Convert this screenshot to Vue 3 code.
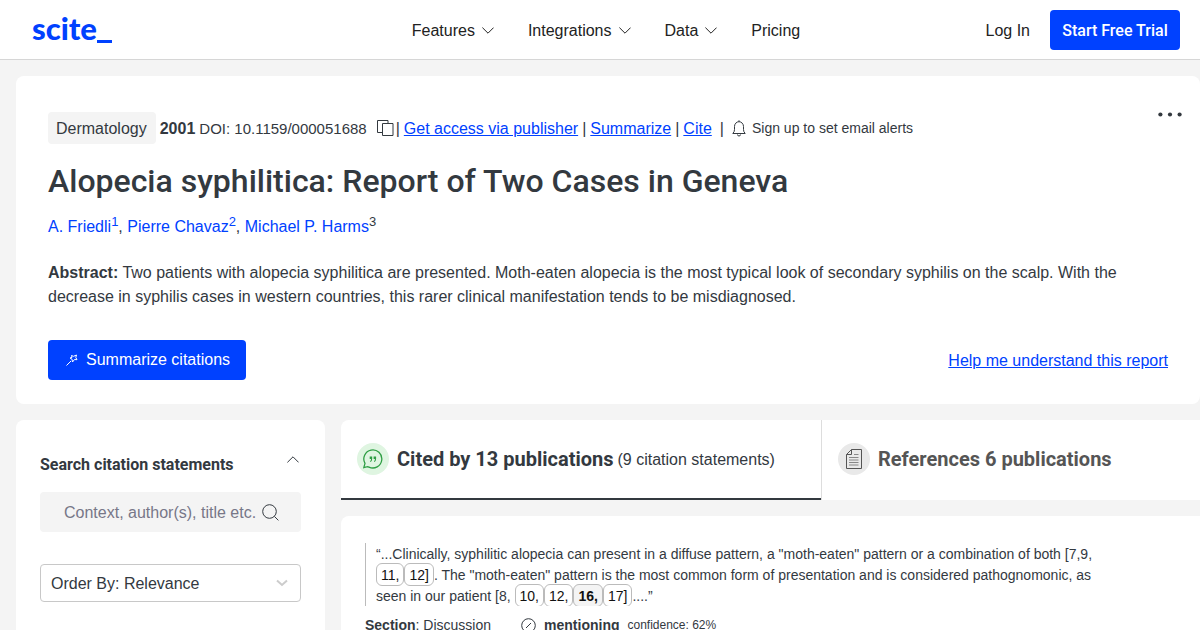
<script setup>
import { ref } from 'vue'

const menu = [
  { label: 'Features', more: true },
  { label: 'Integrations', more: true },
  { label: 'Data', more: true },
  { label: 'Pricing', more: false },
]
const query = ref('')
const order = ref('relevance')
</script>

<template>
  <div class="page">
    <header class="topbar">
      <a class="logo" href="#" aria-label="scite">scite<span class="logo-bar"></span></a>
      <nav class="menu" aria-label="Main">
        <a v-for="item in menu" :key="item.label" href="#" class="menu-item">
          {{ item.label }}
          <svg v-if="item.more" width="12" height="7" viewBox="0 0 12 7" aria-hidden="true"><path d="M.4.6 6 6.200 11.600.6" /></svg>
        </a>
      </nav>
      <div class="account">
        <a href="#" class="login">Log In</a>
        <button type="button" class="primary trial">Start Free Trial</button>
      </div>
    </header>

    <main class="content">
      <section class="paper">
        <div class="meta">
          <span class="journal">Dermatology</span>
          <strong class="year">2001</strong>
          <span class="doi">DOI: 10.1159/000051688</span>
          <button type="button" class="icon-button copy" aria-label="Copy DOI">
            <svg width="17" height="16" viewBox="0 0 17 16" aria-hidden="true"><path d="M5 12.500H.5V.5H11V3M5.500 3.500h10.500v12H5.500z" /></svg>
          </button>
          <span class="bar">|</span>
          <a href="#" class="link">Get access via publisher</a>
          <span class="bar">|</span>
          <a href="#" class="link">Summarize</a>
          <span class="bar">|</span>
          <a href="#" class="link">Cite</a>
          <span class="bar wide">|</span>
          <button type="button" class="icon-button alerts">
            <svg width="14" height="17" viewBox="0 0 14 17" aria-hidden="true"><path d="M.7 13.500h12.600M.9 13.300Q2.500 12 2.500 9.500v-3a4.500 4.800 0 0 1 9 0v3q0 2.500 1.600 3.800M7 1.700V.3M5.500 14.500a1.500 1.500 0 0 0 3 0" /></svg>
            Sign up to set email alerts
          </button>
          <button type="button" class="icon-button dots" aria-label="More actions">
            <svg width="24" height="5" viewBox="0 0 24 5" aria-hidden="true"><circle cx="2.400" cy="2.500" r="2.100" /><circle cx="12" cy="2.500" r="2.100" /><circle cx="21.600" cy="2.500" r="2.100" /></svg>
          </button>
        </div>
        <h1>Alopecia syphilitica: Report of Two Cases in Geneva</h1>
        <p class="authors"><a href="#">A. Friedli<sup>1</sup></a>, <a href="#">Pierre Chavaz<sup>2</sup></a>, <a href="#">Michael P. Harms</a><sup>3</sup></p>
        <p class="abstract"><strong>Abstract:</strong> Two patients with alopecia syphilitica are presented. Moth-eaten alopecia is the most typical look of secondary syphilis on the scalp. With the decrease in syphilis cases in western countries, this rarer clinical manifestation tends to be misdiagnosed.</p>
        <div class="actions">
          <button type="button" class="primary summarize">
            <svg width="12" height="12" viewBox="0 0 12 12" aria-hidden="true"><path d="M.5 11.500 5 7M5.500 1.500l2 .8L10.500 1l-.7 2.500 1.200 2.200-2.500-.2L6.500 8 6 5.200 4 4l2-.6z" /></svg>
            Summarize citations
          </button>
          <a href="#" class="link help">Help me understand this report</a>
        </div>
      </section>

      <div class="columns">
        <aside class="filters">
          <div class="filters-head">
            <h2>Search citation statements</h2>
            <button type="button" class="icon-button fold" aria-label="Collapse search">
              <svg width="12" height="7" viewBox="0 0 12 7" aria-hidden="true"><path d="M.4 6.400 6 .8l5.600 5.600" /></svg>
            </button>
          </div>
          <label class="search">
            <input v-model="query" type="text" placeholder="Context, author(s), title etc." aria-label="Search citation statements" />
            <svg width="17" height="17" viewBox="0 0 17 17" aria-hidden="true"><circle cx="7.500" cy="7.500" r="6.800" /><path d="m12.400 12.400 4 4" /></svg>
          </label>
          <label class="order">
            <select v-model="order" aria-label="Order by">
              <option value="relevance">Order By: Relevance</option>
            </select>
            <svg width="12" height="8" viewBox="0 0 12 8" aria-hidden="true"><path d="m1 1.500 5 4.500 5-4.500" /></svg>
          </label>
        </aside>

        <div class="results">
          <nav class="tabs" aria-label="Citations and references">
            <button type="button" class="tab active">
              <span class="badge green">
                <svg width="20" height="20" viewBox="0 0 20 20" aria-hidden="true">
                  <path class="stroke" d="M.8 18.700 2 14.400A9 9 0 1 1 6 18.100q-1.400-.6-2.600-.1z" />
                  <path class="solid" d="M6.700 7.400h2.500v2.300q0 2.500-1.800 3.200l-.4-.7q1.200-.7 1.100-2.200H6.700zM10.600 7.400h2.500v2.300q0 2.500-1.800 3.200l-.4-.7q1.200-.7 1.100-2.200h-1.400z" />
                </svg>
              </span>
              <strong>Cited by 13 publications</strong>
              <span class="count">(9 citation statements)</span>
            </button>
            <button type="button" class="tab">
              <span class="badge grey">
                <svg width="16" height="20" viewBox="0 0 16 20" aria-hidden="true"><path d="M5.500.5h10v19H.5v-14zM5.500.5v5h-5" /><path class="lines" d="M8 5.500h4.500M3 8.500h9.500M3 11h9.500M3 13.500h9.500M3 16h9.500" /></svg>
              </span>
              <strong>References 6 publications</strong>
            </button>
          </nav>

          <article class="statement">
            <blockquote>“...Clinically, syphilitic alopecia can present in a diffuse pattern, a "moth-eaten" pattern or a combination of both [7,9, <a href="#" class="cite">11,</a><a href="#" class="cite">12]</a>. The "moth-eaten" pattern is the most common form of presentation and is considered pathognomonic, as seen in our patient [8, <a href="#" class="cite">10,</a><a href="#" class="cite">12,</a><a href="#" class="cite current">16,</a><a href="#" class="cite">17]</a>....”</blockquote>
            <div class="detail">
              <span><strong>Section</strong>: Discussion</span>
              <span class="kind">
                <svg width="15" height="15" viewBox="0 0 15 15" aria-hidden="true"><circle cx="7.500" cy="7.500" r="6.800" /><path d="m5 10 5-5" /></svg>
                <strong>mentioning</strong>
                <span class="confidence">confidence: 62%</span>
              </span>
            </div>
          </article>
        </div>
      </div>
    </main>
  </div>
</template>

<style>
body {
  background: #f4f4f4;
}
</style>

<style scoped>
.page {
  height: 100vh;
  overflow: hidden;
  background: #f4f4f4;
  color: #33393f;
  font: 16px/24px "Liberation Sans", Arial, sans-serif;
}
.page *,
.page *::before {
  box-sizing: border-box;
}
svg {
  flex: none;
  fill: none;
  stroke: currentColor;
}
a {
  color: #0041ff;
  text-decoration: none;
}
button,
input,
select {
  margin: 0;
  padding: 0;
  border: 0;
  background: none;
  color: inherit;
  font: inherit;
}
h1,
h2,
p,
blockquote {
  margin: 0;
}

.topbar {
  display: grid;
  grid-template-columns: 1fr auto 1fr;
  align-items: center;
  height: 60px;
  padding: 0 20px 0 32px;
  border-bottom: 1px solid #d6d6d6;
  background: #fff;
}
.logo {
  display: flex;
  padding-bottom: 4px;
  font: 900 31px/32px Lato, sans-serif;
}
.logo-bar {
  align-self: flex-end;
  width: 15px;
  height: 3px;
  margin-bottom: 1px;
  background: #0041ff;
}
.menu {
  display: flex;
  gap: 34px;
  padding-top: 2px;
}
.menu-item {
  display: flex;
  align-items: center;
  gap: 7px;
  color: #222;
}
.account {
  display: flex;
  justify-content: flex-end;
  align-items: center;
  gap: 20px;
}
.login {
  padding-top: 2px;
  color: #222;
}
.primary {
  height: 40px;
  border-radius: 4px;
  background: #0041ff;
  color: #fff;
}
.trial {
  width: 130px;
  padding-top: 2px;
  font-family: Roboto, sans-serif;
  font-weight: 500;
}

.content {
  display: flex;
  flex-direction: column;
  gap: 16px;
  padding: 16px 0 0 16px;
}
.paper {
  padding: 36px 32px 24px;
  border-radius: 8px;
  background: #fff;
}
.meta {
  display: flex;
  align-items: center;
  height: 32px;
  white-space: nowrap;
}
.journal {
  padding: 5px 9px 3px 8px;
  border-radius: 4px;
  background: #f4f4f4;
}
.year,
.doi,
.meta .link,
.bar {
  padding-top: 2px;
}
.year {
  margin: 0 4px;
}
.doi {
  font-size: 15px;
}
.copy {
  display: flex;
  margin-left: 10px;
  margin-right: 2px;
}
.link {
  color: #0041ff;
  text-decoration: underline;
}
.bar {
  margin: 0 4px;
}
.copy + .bar {
  margin-left: 0;
}
.bar.wide {
  margin: 0 8px;
}
.alerts {
  display: flex;
  align-items: center;
  gap: 6px;
  font-size: 14px;
}
.icon-button {
  cursor: pointer;
}
.dots {
  display: flex;
  margin: -28px -14px 0 auto;
}
.dots svg {
  fill: currentColor;
  stroke: none;
}
h1 {
  margin-top: 16px;
  font: 500 32px/42px Roboto, sans-serif;
}
.authors {
  margin-top: 13px;
}
sup {
  font-size: 13px;
  line-height: 0;
}
.abstract {
  margin-top: 22px;
}
.actions {
  display: flex;
  justify-content: space-between;
  align-items: center;
  margin-top: 31px;
}
.help {
  padding-top: 2px;
}
.summarize {
  display: flex;
  align-items: center;
  gap: 8px;
  padding: 0 16px 0 18px;
}

.columns {
  display: grid;
  grid-template-columns: 309px 1fr;
  gap: 16px;
}
.filters {
  min-height: 320px;
  padding: 32px 24px;
  border-radius: 8px;
  background: #fff;
}
.filters-head {
  display: flex;
  justify-content: space-between;
}
h2 {
  padding-top: 1px;
  font: 700 16px/24px Roboto, sans-serif;
}
.fold {
  display: flex;
  align-items: center;
  height: 15px;
  padding-right: 2px;
}
.search {
  display: flex;
  align-items: center;
  height: 40px;
  margin-top: 15px;
  padding: 0 22px 0 24px;
  border-radius: 4px;
  background: #f4f4f4;
}
.search input {
  flex: 1;
  min-width: 0;
  padding-top: 2px;
  outline: none;
}
.search input::placeholder {
  color: #777788;
  opacity: 1;
}
.order {
  display: flex;
  align-items: center;
  position: relative;
  height: 38px;
  margin-top: 32px;
}
.order select {
  width: 100%;
  height: 100%;
  padding: 2px 10px 0;
  border: 1px solid #c8c8c8;
  border-radius: 4px;
  appearance: none;
}
.order svg {
  position: absolute;
  right: 13px;
  stroke: #ccc;
  stroke-width: 2;
  pointer-events: none;
}

.results {
  display: flex;
  flex-direction: column;
  gap: 16px;
  min-width: 0;
}
.tabs {
  display: flex;
  height: 80px;
  overflow: hidden;
  border-radius: 8px 0 0;
  background: #fff;
}
.tab {
  display: flex;
  align-items: center;
  flex: 1;
  padding: 0 16px 2px;
  border-left: 1px solid #ddd;
  color: #555;
  white-space: nowrap;
}
.tab.active {
  flex: 0 0 480px;
  padding-bottom: 0;
  border-left: 0;
  border-bottom: 2px solid #33393f;
  color: #33393f;
}
.tab strong {
  font: 700 20px/24px Roboto, sans-serif;
}
.badge {
  display: grid;
  place-items: center;
  width: 32px;
  height: 32px;
  margin-right: 8px;
  border-radius: 50%;
}
.green {
  background: #dff5e1;
  color: #2f9e44;
}
.green .stroke {
  stroke-width: 1.3;
}
.green .solid {
  fill: currentColor;
  stroke: none;
}
.grey {
  background: #e9e9e9;
}
.grey .lines {
  stroke: #888;
}
.count {
  margin-left: 4px;
  padding-top: 2px;
}

.statement {
  min-height: 240px;
  padding: 27px 104px 24px 24px;
  border-radius: 8px 0 0;
  background: #fff;
  font-size: 14px;
  line-height: 21px;
}
blockquote {
  height: 63px;
  overflow: hidden;
  padding-top: 1px;
  padding-left: 10px;
  border-left: 1px solid #bbb;
}
.cite {
  padding: 3px 4px 2px;
  border: 1px solid #bbb;
  border-radius: 6px;
  color: #111;
}
.cite.current {
  background: #f4f4f4;
  font-weight: 700;
}
.detail {
  display: flex;
  gap: 30px;
  margin-top: 9px;
}
.kind {
  display: flex;
  align-items: center;
  gap: 8px;
}
.confidence {
  font-size: 12px;
}
</style>
